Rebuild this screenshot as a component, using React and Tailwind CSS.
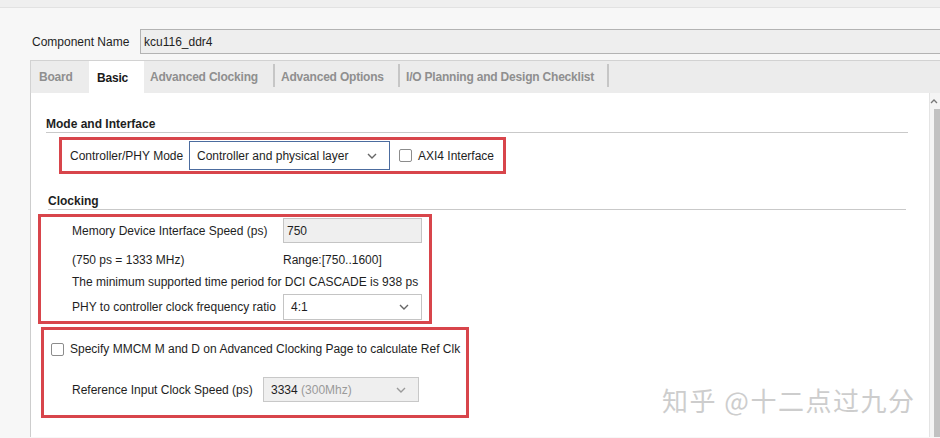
import React from 'react'

// Vivado MIG "Basic" tab, re-drawn

function Chevron({ color = '#666' }) {
  return (
    <svg width="10" height="6" viewBox="0 0 10 6" className="shrink-0">
      <path d="M1 1L5 5L9 1" fill="none" stroke={color} strokeWidth="1.4" />
    </svg>
  )
}

function Checkbox() {
  return <span className="w-[13px] h-[13px] shrink-0 rounded-[2px] border border-[#8c8c8c] bg-white" />
}

function Select({ value, muted, className }) {
  return (
    <div className={`flex items-center justify-between pl-[7px] pr-[12px] ${className}`}>
      <span>
        {value}
        {muted && <span className="text-[#9a9a9a]"> {muted}</span>}
      </span>
      <Chevron color={muted ? '#9a9a9a' : '#666'} />
    </div>
  )
}

const tabs = [
  { label: 'Board', w: 'w-[58px]' },
  { label: 'Basic', w: 'w-[55px]', active: true },
  { label: 'Advanced Clocking', w: 'w-[129px]', pl: 'pl-[6px]', sep: true },
  { label: 'Advanced Options', w: 'w-[123px]', pl: 'pl-[6px]', sep: true },
  { label: 'I/O Planning and Design Checklist', w: 'w-[207px]', pl: 'pl-[6px]', sep: true },
]

export default function App() {
  return (
    <div className="relative w-[940px] h-[438px] overflow-hidden bg-[#f7f7f7] text-[12px] leading-[16px] text-[#1e1e1e] font-['Liberation_Sans',Arial,sans-serif]">
      {/* top strip */}
      <div className="h-[8px] bg-[#efefef] border-b border-[#e2e2e2]" />

      {/* component name */}
      <div className="flex items-center h-[25px] mt-[21px] pl-[32px]">
        <span className="w-[108px] shrink-0">Component Name</span>
        <div className="flex-1 h-[25px] flex items-center pl-[3px] bg-[#eeeeee] border-y border-l border-[#b3b3b3]">
          kcu116_ddr4
        </div>
      </div>

      {/* tab strip */}
      <div className="ml-[30px] mt-[6px] h-[33px] flex items-end bg-[#ececec] border-t border-l border-[#d2d2d2]">
        {tabs.map((t) => (
          <div key={t.label} className="flex items-center h-full">
            <div
              className={`${t.w} ${t.pl || 'pl-[8px]'} h-full flex items-center pb-[1px] font-bold tracking-[-0.2px] ${
                t.active ? 'bg-white text-[#1a1a1a] pt-[2px]' : 'text-[#8f8f8f]'
              }`}
            >
              {t.label}
            </div>
            {t.sep && <span className="w-[2px] h-[23px] bg-[#c6c6c6] mt-[-4px]" />}
          </div>
        ))}
      </div>

      {/* panel */}
      <div className="ml-[30px] h-[344px] flex border-l border-[#cdcdcd]">
        <div className="flex-1 bg-white flex flex-col">
          {/* Mode and Interface */}
          <div className="ml-[15px] mr-[21px] mt-[23px] h-[17px] font-bold border-b border-[#c9c9c9]">
            Mode and Interface
          </div>
          <div className="ml-[28px] mt-[4px] w-[447px] h-[37px] flex items-center pl-[8px] border-[3px] border-[#d8454b]">
            <span className="w-[119px] shrink-0">Controller/PHY Mode</span>
            <Select
              value="Controller and physical layer"
              className="w-[201px] h-[29px] border border-[#4c6c9f] pr-[7px]"
            />
            <div className="flex items-center gap-[6px] ml-[9px]">
              <Checkbox />
              <span>AXI4 Interface</span>
            </div>
          </div>

          {/* Clocking */}
          <div className="ml-[17px] mr-[23px] mt-[19px] h-[17px] font-bold border-b border-[#c9c9c9]">
            Clocking
          </div>
          <div className="ml-[7px] mt-[4px] w-[394px] h-[110px] flex flex-col pt-[1px] pl-[31px] border-[3px] border-[#d8454b]">
            <div className="flex items-center h-[25px]">
              <span className="w-[211px] shrink-0">Memory Device Interface Speed (ps)</span>
              <div className="w-[139px] h-[25px] flex items-center pl-[3px] bg-[#efefef] border border-[#c4c4c4]">
                750
              </div>
            </div>
            <div className="flex mt-[9px]">
              <span className="w-[211px] shrink-0">(750 ps = 1333 MHz)</span>
              <span>Range:[750..1600]</span>
            </div>
            <div className="mt-[6px] whitespace-nowrap">
              The minimum supported time period for DCI CASCADE is 938 ps
            </div>
            <div className="flex items-center mt-[4px]">
              <span className="w-[211px] shrink-0">PHY to controller clock frequency ratio</span>
              <Select value="4:1" className="w-[139px] h-[26px] border border-[#c4c4c4]" />
            </div>
          </div>

          <div className="ml-[10px] mt-[3px] w-[428px] h-[91px] flex flex-col border-[3px] border-[#d8454b]">
            <div className="flex items-center gap-[6px] mt-[11px] ml-[7px]">
              <Checkbox />
              <span>Specify MMCM M and D on Advanced Clocking Page to calculate Ref Clk</span>
            </div>
            <div className="flex items-center mt-[20px] ml-[28px]">
              <span className="w-[191px] shrink-0">Reference Input Clock Speed (ps)</span>
              <Select
                value="3334"
                muted="(300Mhz)"
                className="w-[156px] h-[25px] bg-[#efefef] border border-[#c8c8c8]"
              />
            </div>
          </div>
        </div>

        {/* scrollbar */}
        <div className="w-[11px] flex flex-col items-end border-l border-[#e4e4e4] bg-[#f4f4f4]">
          <svg width="10" height="8" viewBox="0 0 10 8" className="mt-[4px] mr-[1px]">
            <path d="M2 6L5 3L8 6" fill="none" stroke="#777" strokeWidth="1.3" />
          </svg>
          <div className="w-[6px] flex-1 mt-[4px] bg-[#c1c1c1]" />
        </div>
      </div>

      {/* watermark */}
      <div className="absolute left-[662px] top-[384px] text-[26px] leading-[32px] tracking-[1.5px] text-[#cdcdcd] [text-shadow:1px_1px_0_#ffffff] font-['Noto_Sans_CJK_SC',sans-serif] whitespace-nowrap">
        知乎 @十二点过九分
      </div>
    </div>
  )
}
